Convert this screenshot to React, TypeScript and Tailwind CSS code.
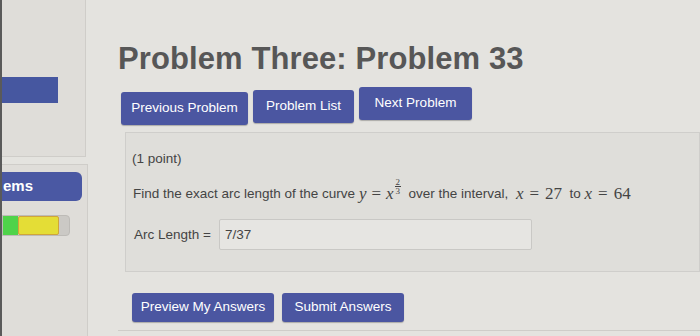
import React from "react";

const btn =
  "bg-[#4b56a1] text-white rounded-[3px] text-[13.5px] flex items-center justify-center shadow-[0_1px_1px_rgba(0,0,0,0.25)]";

const serif = { fontFamily: '"Liberation Serif", "Times New Roman", serif' };

export default function App() {
  return (
    <div
      className="w-[700px] h-[336px] overflow-hidden flex bg-[#e4e3df] text-[#3f3f3f]"
      style={{ fontFamily: '"Liberation Sans", Arial, sans-serif' }}
    >
      {/* sidebar */}
      <div className="w-[88px] shrink-0 flex flex-col border-l-2 border-[#5a5a5a]">
        <div className="h-[157px] w-[84px] bg-[#dfddd9] border-r border-b border-[#cfcdc9] pt-[77px]">
          <div className="h-[26px] w-[56px] bg-[#4657a0]" />
        </div>
        <div className="mt-[7px] flex-1 bg-[#dfddd9] border-r border-t border-[#cfcdc9] pt-[7px]">
          <div className="h-[29px] w-[80px] bg-[#4a58a3] rounded-r-[6px] text-white font-bold text-[15px] flex items-center pl-[1px]">
            ems
          </div>
          <div className="mt-[14px] h-[21px] w-[68px] flex rounded-r-[4px] border border-[#bdbbb7] bg-[#cbc9c5] overflow-hidden">
            <div className="w-[15px] bg-[#4fd34a]" />
            <div className="w-[41px] bg-[#e4dd36] border border-[#d0a53a] rounded-[2px]" />
          </div>
        </div>
      </div>

      {/* main */}
      <div className="flex-1 pl-[30px] pt-[41px] flex flex-col">
        <h1 className="text-[31px] leading-[36px] font-bold text-[#575757] tracking-[0.1px]">
          Problem Three: Problem 33
        </h1>
        <div className="mt-[15px] flex gap-[5px] pl-[3px]">
          <div className={`${btn} w-[127px] h-[33px]`}>Previous Problem</div>
          <div className={`${btn} w-[101px] h-[33px] -mt-[2px]`}>Problem List</div>
          <div className={`${btn} w-[113px] h-[33px] -mt-[5px]`}>Next Problem</div>
        </div>
        <div className="mt-[7px] ml-[7px] h-[140px] bg-[#dfdeda] border border-[#cfcecb] pl-[6px] pt-[16px] text-[13.5px] text-[#444]">
          <div>(1 point)</div>
          <div className="mt-[9px] ml-[1px] flex items-end">
            <span>Find the exact arc length of the curve&nbsp;</span>
            <span className="text-[17px] flex items-end leading-[20px]" style={serif}>
              <i>y</i>
              <span className="mx-[5px]">=</span>
              <i>x</i>
              <span className="text-[9px] flex flex-col items-center leading-[8px] mb-[9px] ml-[1px]">
                <span>2</span>
                <span className="border-t border-[#444] px-[1px]">3</span>
              </span>
            </span>
            <span>&nbsp;&nbsp;over the interval,&nbsp;&nbsp;</span>
            <span className="text-[17px] leading-[20px]" style={serif}>
              <i>x</i>
              <span className="mx-[6px]">=</span>27
            </span>
            <span>&nbsp;&nbsp;to&nbsp;</span>
            <span className="text-[17px] leading-[20px]" style={serif}>
              <i>x</i>
              <span className="mx-[6px]">=</span>64
            </span>
          </div>
          <div className="mt-[15px] ml-[2px] flex items-center">
            <span>Arc Length =</span>
            <div className="ml-[8px] w-[313px] h-[31px] bg-[#e6e5e2] border border-[#c9c8c5] rounded-[2px] flex items-center pl-[5px]">
              7/37
            </div>
          </div>
        </div>
        <div className="mt-[21px] ml-[14px] flex gap-[8px]">
          <div className={`${btn} w-[142px] h-[29px]`}>Preview My Answers</div>
          <div className={`${btn} w-[122px] h-[29px]`}>Submit Answers</div>
        </div>
        <div className="mt-[8px] border-t border-[#cfcdc9]" />
      </div>
    </div>
  );
}
